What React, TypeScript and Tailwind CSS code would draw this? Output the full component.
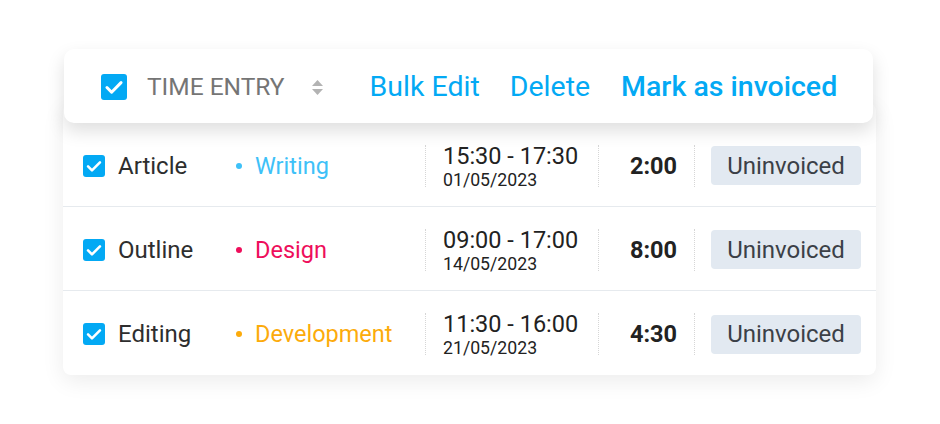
import type { ReactNode } from 'react'

type Entry = {
  name: string
  category: string
  color: string
  time: string
  date: string
  duration: string
}

const entries: Entry[] = [
  { name: 'Article', category: 'Writing', color: '#3ec1f8', time: '15:30 - 17:30', date: '01/05/2023', duration: '2:00' },
  { name: 'Outline', category: 'Design', color: '#ee0e5b', time: '09:00 - 17:00', date: '14/05/2023', duration: '8:00' },
  { name: 'Editing', category: 'Development', color: '#fcab0b', time: '11:30 - 16:00', date: '21/05/2023', duration: '4:30' },
]

function Checkbox({ size }: { size: number }) {
  return (
    <div
      className={
        size === 26
          ? 'flex h-[26px] w-[26px] shrink-0 items-center justify-center rounded-[3px] bg-[#03a9f4]'
          : 'flex h-[22px] w-[22px] shrink-0 items-center justify-center rounded-[3px] bg-[#03a9f4]'
      }
    >
      <svg width={size} height={size} viewBox="0 0 24 24" fill="none">
        <path d="M5.5 12.5l4.3 4.3L18.5 8" stroke="white" strokeWidth="2.8" strokeLinecap="round" strokeLinejoin="round" />
      </svg>
    </div>
  )
}

function Sep() {
  return <div className="h-[42px] w-0 shrink-0 border-l border-dotted border-[#d6d6d6]" />
}

function Row({ e, last, children }: { e: Entry; last?: boolean; children?: ReactNode }) {
  return (
    <div className={last ? 'flex h-[84px] items-center pl-[20px] pt-[2px]' : 'flex h-[84px] items-center border-b border-[#e6eaee] pl-[20px] pt-[2px]'}>
      <Checkbox size={22} />
      <div className="ml-[13px] w-[118px] text-[24px] leading-[28px] text-[#2e2e2e]">{e.name}</div>
      <div className="h-[6px] w-[6px] shrink-0 rounded-full" style={{ backgroundColor: e.color }} />
      <div className="ml-[13px] w-[170px] text-[23.5px] leading-[28px]" style={{ color: e.color }}>
        {e.category}
      </div>
      <Sep />
      <div className="ml-[17px] w-[155px] text-[#222]">
        <div className="text-[23.5px] leading-[28px]">{e.time}</div>
        <div className="text-[17.7px] leading-[20px]">{e.date}</div>
      </div>
      <Sep />
      <div className="w-[95px] pr-[17px] text-right text-[23.5px] font-bold leading-[28px] text-[#222]">{e.duration}</div>
      <Sep />
      <div className="ml-[16px] flex h-[39px] w-[150px] items-center justify-center rounded-[4px] bg-[#e2e9f1] text-[24px] text-[#3b4047]">
        Uninvoiced
      </div>
      {children}
    </div>
  )
}

export default function App() {
  return (
    <div className="h-[424px] w-[940px] overflow-hidden bg-white pl-[63px] pt-[49px] font-['Roboto',sans-serif]">
      <div className="w-[813px]">
        <div className="relative z-10 ml-[1px] flex h-[74px] w-[809px] items-center rounded-[10px] bg-white pl-[37px] pt-[2px] shadow-[0_8px_18px_rgba(0,0,0,0.13)]">
          <Checkbox size={26} />
          <div className="ml-[20px] text-[24.5px] leading-[28px] text-[#757575]">TIME ENTRY</div>
          <svg className="ml-[26px]" width="13" height="15" viewBox="0 0 13 15">
            <path d="M6.5 0L12 6H1z" fill="#b3b3b3" />
            <path d="M6.5 15L12 9H1z" fill="#b3b3b3" />
          </svg>
          <div className="ml-[46px] text-[28.5px] leading-[32px] text-[#03a9f4]">Bulk Edit</div>
          <div className="ml-[30px] text-[28.5px] leading-[32px] text-[#03a9f4]">Delete</div>
          <div className="ml-[31px] text-[28.5px] font-medium leading-[32px] text-[#03a9f4]">Mark as invoiced</div>
        </div>
        <div className="-mt-[20px] rounded-[8px] bg-white pt-[20px] shadow-[0_6px_22px_rgba(0,0,0,0.08)]">
          {entries.map((e, i) => (
            <Row key={e.name} e={e} last={i === entries.length - 1} />
          ))}
        </div>
      </div>
    </div>
  )
}
